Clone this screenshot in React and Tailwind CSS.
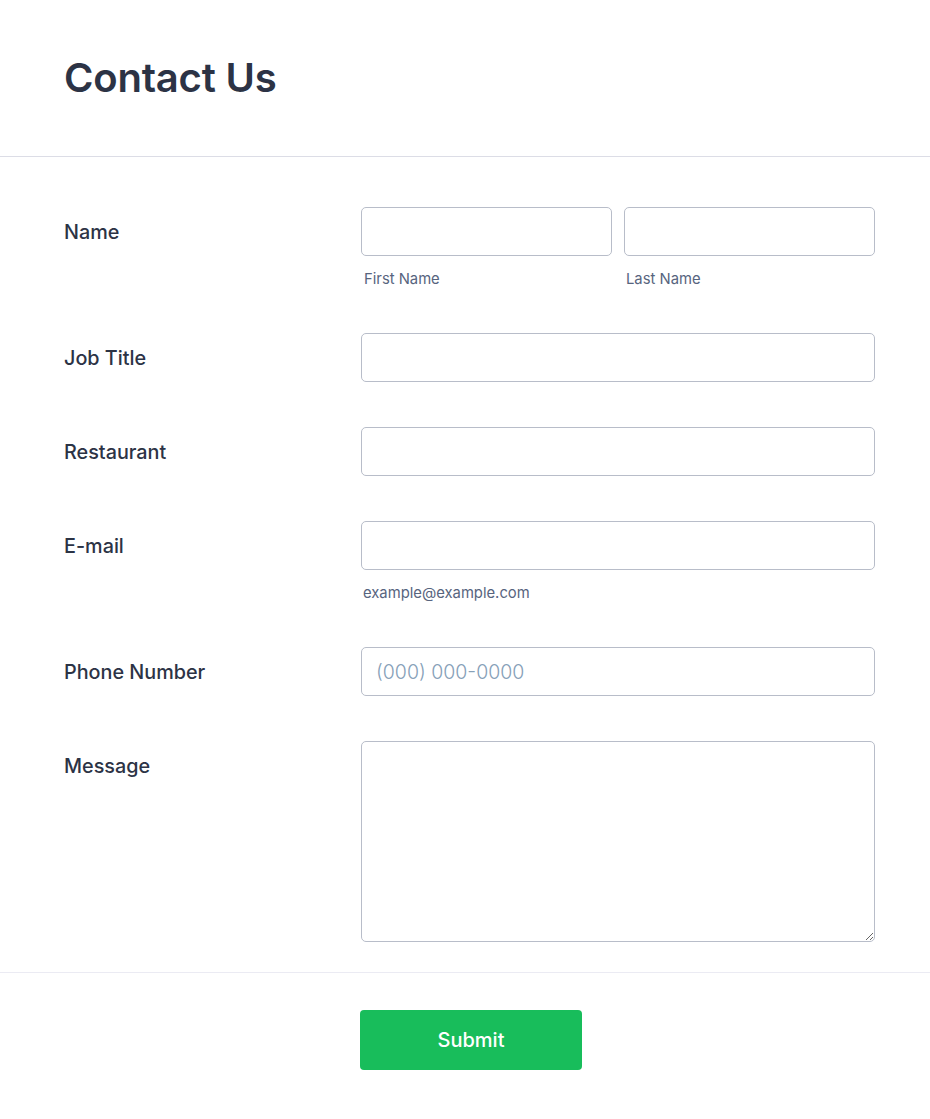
export default function App() {
  const inputCls =
    "h-[49px] w-full rounded-[5px] border border-[#b8bdc9] bg-white px-[14px] text-[19.5px] font-light text-[#2c3345] outline-none placeholder:text-[#86a0b8]";
  const subCls = "mt-[14px] text-[14.8px] leading-[18px] text-[#57647e]";

  return (
    <div
      className="min-h-[1119px] bg-white text-[#2c3345]"
      style={{ fontFamily: "Inter, 'Noto Sans', sans-serif" }}
    >
      <header className="flex h-[157px] items-center border-b border-[#dcdde6] px-16">
        <h1 className="pb-px text-[40px] font-semibold tracking-[-0.2px] text-[#2c3345]">
          Contact Us
        </h1>
      </header>

      <form className="border-b border-[#ebebf3] pb-[30px] pl-16 pr-[55px] pt-[50px]">
        {/* Name: two inputs with sub-labels */}
        <div className="flex">
          <Label>Name</Label>
          <div className="flex flex-1 gap-[12px]">
            <div className="flex-1">
              <input className={inputCls} />
              <p className={`${subCls} pl-[3px]`}>First Name</p>
            </div>
            <div className="flex-1">
              <input className={inputCls} />
              <p className={`${subCls} pl-[2px]`}>Last Name</p>
            </div>
          </div>
        </div>

        <Row label="Job Title" className="mt-[45px]">
          <input className={inputCls} />
        </Row>

        <Row label="Restaurant" className="mt-[45px]">
          <input className={inputCls} />
        </Row>

        <Row label="E-mail" className="mt-[45px]">
          <input type="email" className={inputCls} />
          <p className={`${subCls} pl-[2px]`}>example@example.com</p>
        </Row>

        <Row label="Phone Number" className="mt-[45px]">
          <input
            type="tel"
            placeholder="(000) 000-0000"
            className={inputCls}
          />
        </Row>

        <Row label="Message" className="mt-[45px]">
          <textarea className="block h-[201px] w-full rounded-[5px] border border-[#b8bdc9] bg-white px-[14px] py-[10px] text-[18px] outline-none" />
        </Row>
      </form>

      <div className="flex justify-center pt-[37px]">
        <button
          type="button"
          className="ml-[12px] h-[60px] w-[222px] rounded-[4px] bg-[#18bd5b] text-[20px] font-medium text-white"
        >
          Submit
        </button>
      </div>
    </div>
  );
}

function Label({ children }) {
  return (
    <label className="w-[297px] shrink-0 pt-[13px] text-[19.8px] font-medium leading-[25px]">
      {children}
    </label>
  );
}

function Row({ label, className = "", children }) {
  return (
    <div className={`flex ${className}`}>
      <Label>{label}</Label>
      <div className="flex-1">{children}</div>
    </div>
  );
}
